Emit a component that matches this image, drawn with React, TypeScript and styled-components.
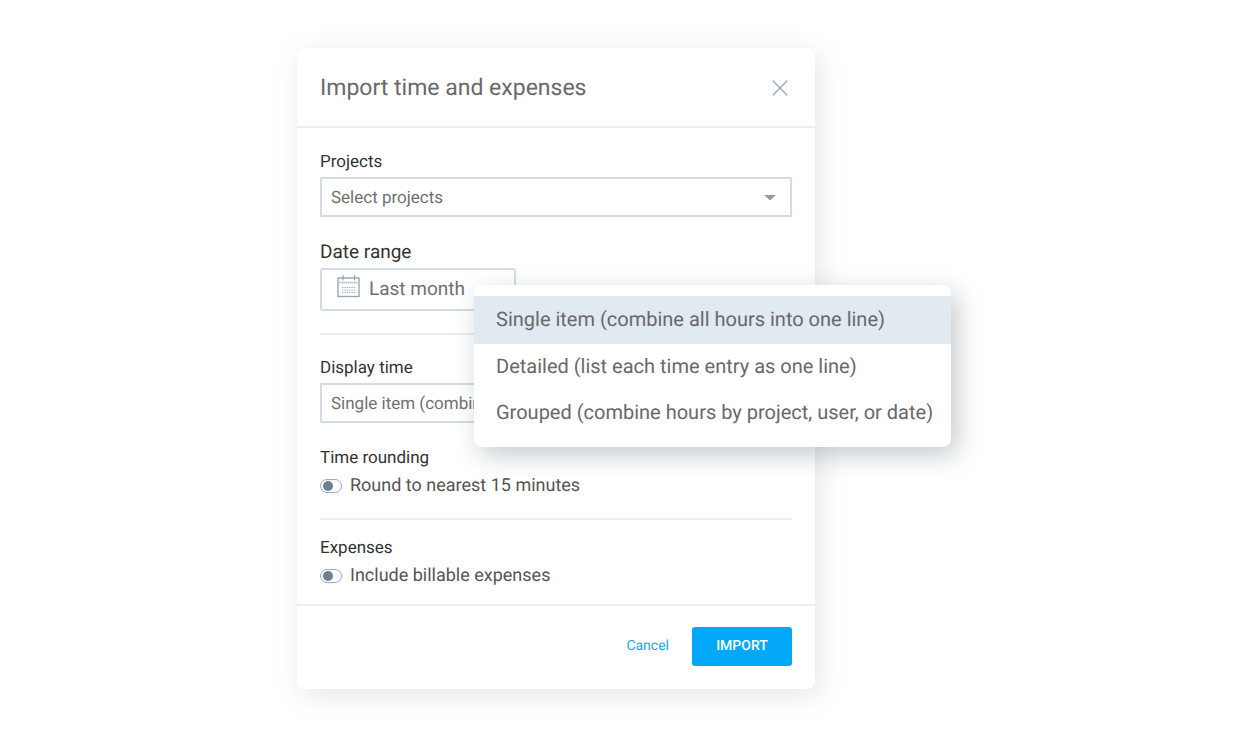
import React from "react";
import styled, { createGlobalStyle } from "styled-components";

const GlobalStyle = createGlobalStyle`
  *, *::before, *::after { box-sizing: border-box; }
  body {
    margin: 0;
    background: #ffffff;
    font-family: Roboto, "Liberation Sans", sans-serif;
    color: #696969;
    text-rendering: geometricPrecision;
  }
  button, select { font-family: inherit; text-rendering: inherit; }
`;

const Stage = styled.main`
  max-width: 654px;
  margin: 0 auto;
  padding: 48px 136px 48px 0;
`;

const Modal = styled.section`
  background: #ffffff;
  border-radius: 8px;
  box-shadow: 4px 6px 28px rgba(70, 90, 90, 0.15);
`;

const Header = styled.header`
  display: flex;
  align-items: center;
  justify-content: space-between;
  padding: 25px 23px 23px;
  border-bottom: 2px solid #e8eef2;
`;

const Title = styled.h1`
  margin: 0;
  font-size: 23px;
  line-height: 30px;
  font-weight: 400;
`;

const CloseButton = styled.button`
  display: flex;
  padding: 4px;
  border: 0;
  background: none;
  color: #94a7b5;
  cursor: pointer;
`;

const Body = styled.div`
  padding: 23px 23px 18px;
`;

const Field = styled.div<{ $gap: number }>`
  position: relative;
  display: flex;
  flex-direction: column;
  align-items: flex-start;
  margin-bottom: ${(p) => p.$gap}px;
`;

const Label = styled.label<{ $large?: boolean }>`
  font-size: ${(p) => (p.$large ? 19 : 17)}px;
  line-height: 22px;
  margin-bottom: ${(p) => (p.$large ? 5 : 4)}px;
  color: #333333;
`;

const GroupLabel = styled(Label).attrs({ as: "h2" })`
  margin: 0 0 7px;
  font-weight: 400;
`;

const SelectBox = styled.div`
  position: relative;
  width: 100%;
  color: #999c9e;

  svg {
    position: absolute;
    right: 16px;
    top: 18px;
    pointer-events: none;
  }
`;

const Select = styled.select`
  display: block;
  width: 100%;
  height: 40px;
  padding: 2px 40px 0 9px;
  border: 2px solid #d3dde5;
  border-radius: 0;
  background: #ffffff;
  color: #707070;
  font-size: 17px;
  appearance: none;
`;

const DateButton = styled.button`
  display: flex;
  align-items: center;
  gap: 9px;
  width: 196px;
  height: 43px;
  padding: 0 15px 2px;
  border: 2px solid #d3dde5;
  border-radius: 3px;
  background: #ffffff;
  color: #707070;
  font-size: 19px;
  cursor: pointer;

  svg { margin-bottom: 4px; }
`;

const Divider = styled.hr<{ $gap: number }>`
  height: 2px;
  margin: 0 0 ${(p) => p.$gap}px;
  border: 0;
  background: #e8eef2;
`;

const ToggleRow = styled.label`
  display: flex;
  align-items: center;
  gap: 8px;
  font-size: 18px;
  line-height: 20px;
  color: #555555;
  cursor: pointer;
`;

const Toggle = styled.input`
  appearance: none;
  display: flex;
  align-items: center;
  width: 22px;
  height: 14px;
  margin: 0;
  padding: 0 2px;
  border: 1px solid #9aabb8;
  border-radius: 7px;

  &::before {
    content: "";
    width: 10px;
    height: 10px;
    border-radius: 50%;
    background: #708090;
  }
  &:checked { justify-content: flex-end; }
`;

const Menu = styled.ul`
  position: absolute;
  z-index: 1;
  left: 154px;
  bottom: -24px;
  width: 477px;
  margin: 0;
  padding: 11px 0;
  list-style: none;
  border-radius: 8px;
  background: #ffffff;
  box-shadow: 6px 8px 26px rgba(70, 90, 100, 0.32);
`;

const Option = styled.button<{ $active?: boolean }>`
  display: block;
  width: 100%;
  height: ${(p) => (p.$active ? 48 : 46)}px;
  padding: 0 22px 2px;
  border: 0;
  background: ${(p) => (p.$active ? "#e1e9f1" : "#ffffff")};
  color: #696969;
  font-size: 20px;
  text-align: left;
  white-space: nowrap;
  cursor: pointer;
`;

const Footer = styled.footer`
  display: flex;
  align-items: center;
  justify-content: flex-end;
  gap: 23px;
  padding: 21px 23px 23px;
  border-top: 2px solid #e8eef2;
`;

const CancelButton = styled.button`
  padding: 0 0 2px;
  border: 0;
  background: none;
  color: #1ba6ee;
  font-size: 14px;
  cursor: pointer;
`;

const ImportButton = styled.button`
  width: 100px;
  height: 39px;
  padding: 0 0 2px;
  border: 0;
  border-radius: 3px;
  background: #03a9f8;
  color: #ffffff;
  font-size: 14px;
  font-weight: 500;
  cursor: pointer;
`;

const CloseIcon = () => (
  <svg width="16" height="16" viewBox="0 0 16 16" fill="none" stroke="currentColor" strokeWidth="1.3">
    <path d="M0.8 0.8 15.2 15.2M15.2 0.8 0.8 15.2" />
  </svg>
);

const Arrow = () => (
  <svg width="12" height="6" viewBox="0 0 12 6" fill="currentColor">
    <path d="M0 0H12L6.8 4.8Q6 5.5 5.2 4.8Z" />
  </svg>
);

const CalendarIcon = () => (
  <svg width="23" height="23" viewBox="0 0 23 23" fill="none" stroke="#93a8b6">
    <rect x="1" y="3" width="21" height="18.5" strokeWidth="1.4" />
    <path d="M1.5 7.6H21.5" stroke="#c3ced6" strokeWidth="1.8" />
    <path d="M6 0V5.5M17.5 0V5.5" strokeWidth="1.2" />
    <path d="M5 12.5H18.5M5 15H18.5M5 17.5H18.5" strokeWidth="1.2" strokeDasharray="1.3 1.1" />
  </svg>
);

const options = [
  "Single item (combine all hours into one line)",
  "Detailed (list each time entry as one line)",
  "Grouped (combine hours by project, user, or date)",
];

export default function App() {
  return (
    <>
      <GlobalStyle />
      <Stage>
        <Modal role="dialog" aria-labelledby="title">
          <Header>
            <Title id="title">Import time and expenses</Title>
            <CloseButton aria-label="Close">
              <CloseIcon />
            </CloseButton>
          </Header>
          <Body>
            <Field $gap={24}>
              <Label htmlFor="projects">Projects</Label>
              <SelectBox>
                <Select id="projects">
                  <option>Select projects</option>
                </Select>
                <Arrow />
              </SelectBox>
            </Field>
            <Field $gap={22}>
              <Label $large htmlFor="range">Date range</Label>
              <DateButton id="range">
                <CalendarIcon />
                Last month
              </DateButton>
            </Field>
            <Divider $gap={22} />
            <Field $gap={24}>
              <Label htmlFor="display">Display time</Label>
              <SelectBox>
                <Select id="display">
                  {options.map((text) => (
                    <option key={text}>{text}</option>
                  ))}
                </Select>
                <Arrow />
              </SelectBox>
              <Menu>
                {options.map((text, i) => (
                  <li key={text}>
                    <Option $active={i === 0}>{text}</Option>
                  </li>
                ))}
              </Menu>
            </Field>
            <Field $gap={22}>
              <GroupLabel>Time rounding</GroupLabel>
              <ToggleRow>
                <Toggle type="checkbox" />
                Round to nearest 15 minutes
              </ToggleRow>
            </Field>
            <Divider $gap={17} />
            <Field $gap={0}>
              <GroupLabel>Expenses</GroupLabel>
              <ToggleRow>
                <Toggle type="checkbox" />
                Include billable expenses
              </ToggleRow>
            </Field>
          </Body>
          <Footer>
            <CancelButton>Cancel</CancelButton>
            <ImportButton>IMPORT</ImportButton>
          </Footer>
        </Modal>
      </Stage>
    </>
  );
}
